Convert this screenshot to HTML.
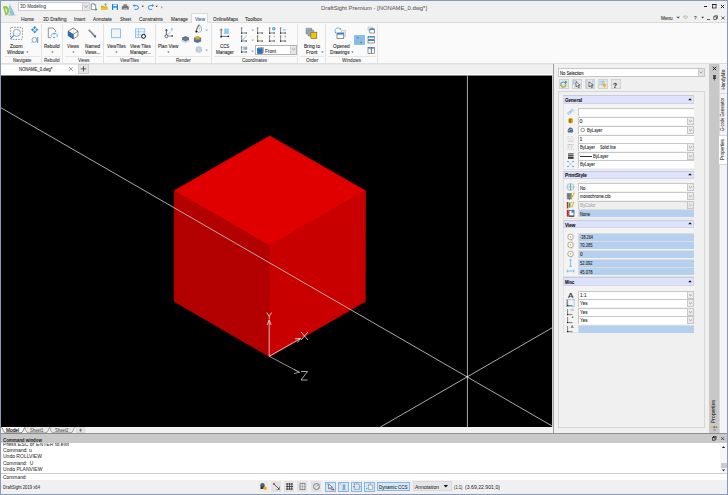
<!DOCTYPE html>
<html><head><meta charset="utf-8"><style>
html,body{margin:0;padding:0;width:728px;height:495px;overflow:hidden;background:#f0f0f0}
body{position:relative;font-family:"Liberation Sans",sans-serif}
div,span,svg{position:absolute}
.t{white-space:nowrap}
</style></head><body>
<div style="left:0px;top:0px;width:728px;height:495px;background:#f0f0f0"></div>
<div style="left:1px;top:22px;width:726px;height:42px;background:#fafafa;border-top:1px solid #dadada;border-bottom:1px solid #dcdcdc;box-sizing:border-box"></div>
<div style="left:3.5px;top:56px;width:36px;height:1px;background:#e6e6e6"></div>
<div style="left:43.5px;top:56px;width:17px;height:1px;background:#e6e6e6"></div>
<div style="left:64.5px;top:56px;width:37px;height:1px;background:#e6e6e6"></div>
<div style="left:105.5px;top:56px;width:48px;height:1px;background:#e6e6e6"></div>
<div style="left:157.5px;top:56px;width:52px;height:1px;background:#e6e6e6"></div>
<div style="left:213.5px;top:56px;width:82px;height:1px;background:#e6e6e6"></div>
<div style="left:299.5px;top:56px;width:24px;height:1px;background:#e6e6e6"></div>
<div style="left:327.5px;top:56px;width:48px;height:1px;background:#e6e6e6"></div>
<div style="left:41px;top:24px;width:1px;height:39px;background:#e2e2e2"></div>
<div style="left:62px;top:24px;width:1px;height:39px;background:#e2e2e2"></div>
<div style="left:103px;top:24px;width:1px;height:39px;background:#e2e2e2"></div>
<div style="left:155px;top:24px;width:1px;height:39px;background:#e2e2e2"></div>
<div style="left:211px;top:24px;width:1px;height:39px;background:#e2e2e2"></div>
<div style="left:297px;top:24px;width:1px;height:39px;background:#e2e2e2"></div>
<div style="left:325px;top:24px;width:1px;height:39px;background:#e2e2e2"></div>
<div style="left:377px;top:24px;width:1px;height:39px;background:#e2e2e2"></div>
<div style="left:1px;top:64px;width:552px;height:11px;background:#f0f0f0"></div>
<div style="left:1px;top:64px;width:77px;height:11px;background:#ffffff"></div>
<div style="left:1px;top:74px;width:552px;height:1px;background:#ffffff"></div>
<div style="left:1px;top:63px;width:552px;height:1px;background:#e0e0e0"></div>
<div style="left:1px;top:64px;width:552px;height:0.6px;background:#e8e8e8"></div>
<div style="left:1px;top:75px;width:551px;height:1px;background:#808080"></div>
<div style="left:1px;top:76px;width:551px;height:351px;background:#000"></div>
<svg style="left:1px;top:75px;" width="551" height="352" viewBox="0 0 551 352">
<rect x="0" y="0" width="551" height="1" fill="#808080"/>
<g stroke-width="0.6" transform="translate(0,0.5)">
<polygon points="268.8,60.4 364.5,115.2 268.6,170.3 173.1,115.2" fill="#e00000" stroke="#e00000"/>
<polygon points="173.1,115.2 268.6,170.3 268.5,281.3 173.1,226" fill="#b30000" stroke="#b30000"/>
<polygon points="268.6,170.3 364.5,115.2 364.3,226.1 268.5,281.3" fill="#c80000" stroke="#c80000"/>
</g>
<g stroke="#bcbcbc" stroke-width="0.9" fill="none">
<line x1="0" y1="32.8" x2="552" y2="351.5"/>
<line x1="466.4" y1="0" x2="466.4" y2="352"/>
<line x1="379.4" y1="352" x2="552" y2="252.3"/>
</g>
<circle cx="466.4" cy="301.8" r="1" fill="#d8d8d8"/>
<g stroke="#e6e6e6" stroke-width="0.8" fill="none">
<line x1="268.2" y1="281.3" x2="268.2" y2="245"/>
<polyline points="266.2,250 268.2,245 270.2,250"/>
<polyline points="265.8,237.5 268.2,241.5 270.6,237.5"/><line x1="268.2" y1="241.5" x2="268.2" y2="244.5"/>
<line x1="268.2" y1="281.3" x2="299.5" y2="263.5"/>
<polyline points="294,263.8 299.5,263.5 296.5,267.5"/>
<line x1="300" y1="257" x2="307" y2="265"/><line x1="307" y1="257" x2="300" y2="265"/>
</g>
<g stroke="#b8b8b8" stroke-width="0.8" fill="none">
<line x1="268.2" y1="281.3" x2="298.5" y2="297.3"/>
<polyline points="293,294.5 298.5,297.3 293,298.5"/>
<polyline points="300,296.5 306.5,296.5 300,305 306.5,305" stroke="#d0d0d0"/>
</g>
</svg>
<div style="left:552px;top:75px;width:1px;height:359px;background:#d0d0d0"></div>
<div style="left:553px;top:64px;width:1px;height:370px;background:#a0a0a0"></div>
<div style="left:709px;top:64px;width:10px;height:368.7px;background:#c8c8c8"></div>
<div style="left:719px;top:64px;width:8px;height:368.7px;background:#f3f3f3;border-left:1px solid #dadada;box-sizing:border-box"></div>
<div style="left:1px;top:427px;width:552px;height:7px;background:#f2f2f2"></div>
<div style="left:1px;top:433px;width:726px;height:1.5px;background:#909090"></div>
<div style="left:1px;top:434px;width:726px;height:9px;background:#c9c9c9"></div>
<div style="left:1px;top:443px;width:726px;height:30px;background:#ffffff"></div>
<div style="left:1px;top:473px;width:726px;height:1px;background:#d0d0d0"></div>
<div style="left:1px;top:474px;width:726px;height:6px;background:#ffffff"></div>
<div style="left:1px;top:480px;width:726px;height:14px;background:#f0f0f0"></div>
<svg style="left:0px;top:0px;" width="20" height="20" viewBox="0 0 20 20">
<polygon points="9.6,3.8 15.2,15.6 8.4,15.6" fill="#93c2ca"/>
<path d="M9.6,9 C10.8,9.2 10.6,11 9.8,11.6 C9,12.2 9.6,13.4 10.8,13.6 L10,14.4 C8.8,14 8.6,12.6 9.4,11.8 Z" fill="#e6f1f3"/>
<path d="M2.8,6.6 C5,5.6 8.6,6 8.9,9.2 C9.2,12.4 7.6,15.4 5.6,15.6 C4.8,12.6 3.8,9.6 2.8,6.6 Z" fill="#8fc845"/>
<path d="M5.2,8.6 C6.2,8.4 7.2,9 7.1,10.6 C7,12 6.6,12.8 6.2,13 C5.9,11.6 5.6,10 5.2,8.6Z" fill="#eef5e6"/>
</svg>
<div style="left:18px;top:2px;width:72px;height:9px;background:#fff;border:1px solid #cdcdcd;box-sizing:border-box"></div>
<div style="left:82px;top:3px;width:7px;height:7px;background:#e6e6e6;border-left:1px solid #c8c8c8;box-sizing:border-box"></div>
<svg style="left:83px;top:4px;" width="6" height="5" viewBox="0 0 6 5"><polyline points="1.2,1.8 3,3.4 4.8,1.8" stroke="#777" stroke-width="0.7" fill="none"/></svg>
<span class="t" style="left:19.5px;top:4.23px;font-size:5.4px;line-height:5.4px;color:#444;transform:scaleX(0.8577);transform-origin:0 0;-webkit-text-stroke:0.05px #444;">3D Modeling</span>
<svg style="left:90px;top:3px;" width="8" height="8" viewBox="0 0 8 8"><path d="M1.3,0.9 H4.3 L5.6,2.2 V6.6 H1.3 Z" fill="#fff" stroke="#555" stroke-width="0.6"/><path d="M4.3,0.9 V2.2 H5.6" fill="none" stroke="#555" stroke-width="0.5"/><path d="M6,5.2 V7.8 M4.7,6.5 H7.3" stroke="#3bb34a" stroke-width="0.8"/></svg>
<svg style="left:100px;top:3px;" width="9" height="8" viewBox="0 0 9 8"><path d="M1,2.8 H3.2 L3.8,3.6 H7.4 V7 H1 Z" fill="#d9a21b"/><path d="M1,4.4 H7.8 L7.2,7 H1Z" fill="#f2c230"/><path d="M5.6,0.6 V3.2 M4.6,1.6 L5.6,0.6 L6.6,1.6" stroke="#3bb34a" stroke-width="0.8" fill="none"/></svg>
<svg style="left:111px;top:3px;" width="8" height="8" viewBox="0 0 8 8"><path d="M1,1 H6.2 L7,1.8 V7 H1 Z" fill="#1a85d6"/><rect x="2.2" y="1.4" width="3.6" height="1.8" fill="#fff"/><rect x="2.2" y="4.6" width="3.6" height="2.4" fill="#e8f3fc"/></svg>
<svg style="left:121px;top:3px;" width="9" height="8" viewBox="0 0 9 8"><rect x="2.4" y="1.2" width="3.8" height="2" fill="#8a8a8a"/><path d="M0.8,4.6 C0.8,3.4 1.6,3 2.4,3 H6.2 C7,3 7.8,3.4 7.8,4.6 V6.4 H0.8Z" fill="#707070"/><rect x="2.4" y="5.2" width="3.8" height="1.8" fill="#b8b8b8"/></svg>
<svg style="left:132px;top:3px;" width="8" height="8" viewBox="0 0 8 8"><path d="M2.4,2.6 H4.6 A1.9,1.9 0 0 1 4.6,6.4 H2.6" stroke="#1a85d6" stroke-width="0.9" fill="none"/><path d="M0.8,2.6 L2.6,1.1 V4.1 Z" fill="#1a85d6"/></svg>
<svg style="left:141px;top:4px;" width="4" height="4" viewBox="0 0 4 4"><path d="M0.4,1.8 H3 L1.7,3.1Z" fill="#222"/></svg>
<svg style="left:147px;top:3px;" width="8" height="8" viewBox="0 0 8 8"><path d="M5.4,2.6 H3.2 A1.9,1.9 0 0 0 3.2,6.4 H5.2" stroke="#1a85d6" stroke-width="0.9" fill="none"/><path d="M7,2.6 L5.2,1.1 V4.1 Z" fill="#1a85d6"/></svg>
<svg style="left:155px;top:4px;" width="4" height="4" viewBox="0 0 4 4"><path d="M0.4,1.8 H3 L1.7,3.1Z" fill="#222"/></svg>
<svg style="left:160px;top:4px;" width="4" height="6" viewBox="0 0 4 6"><rect x="1" y="2.6" width="1.4" height="1.6" fill="#8da0c0"/></svg>
<span class="t" style="left:320.5px;top:4.92px;font-size:6.0px;line-height:6.0px;color:#5a5a5a;transform:scaleX(0.9722);transform-origin:0 0;-webkit-text-stroke:0.05px #5a5a5a;">DraftSight Premium - [NONAME_0.dwg*]</span>
<div style="left:704px;top:5.8px;width:2.6px;height:1px;background:#222"></div>
<svg style="left:711px;top:3px;" width="6" height="6" viewBox="0 0 6 6"><rect x="1.4" y="1.4" width="3.6" height="3.6" fill="none" stroke="#222" stroke-width="0.8"/><rect x="1" y="1" width="4.4" height="1" fill="#222"/></svg>
<svg style="left:720px;top:3.5px;" width="5" height="5" viewBox="0 0 5 5"><path d="M0.9,0.9 L4.1,4.1 M4.1,0.9 L0.9,4.1" stroke="#111" stroke-width="0.9"/></svg>
<div style="left:191px;top:13px;width:17px;height:10px;background:#fafafa;border:1px solid #dadada;border-bottom:none;box-sizing:border-box"></div>
<span class="t" style="left:21px;top:16.66px;font-size:5.6px;line-height:5.6px;color:#333;transform:scaleX(0.8703);transform-origin:0 0;-webkit-text-stroke:0.1px #333;">Home</span>
<span class="t" style="left:42.6px;top:16.66px;font-size:5.6px;line-height:5.6px;color:#333;transform:scaleX(0.8298);transform-origin:0 0;-webkit-text-stroke:0.1px #333;">3D Drafting</span>
<span class="t" style="left:73.9px;top:16.66px;font-size:5.6px;line-height:5.6px;color:#333;transform:scaleX(0.8140);transform-origin:0 0;-webkit-text-stroke:0.1px #333;">Insert</span>
<span class="t" style="left:93.3px;top:16.66px;font-size:5.6px;line-height:5.6px;color:#333;transform:scaleX(0.8431);transform-origin:0 0;-webkit-text-stroke:0.1px #333;">Annotate</span>
<span class="t" style="left:120.1px;top:16.66px;font-size:5.6px;line-height:5.6px;color:#333;transform:scaleX(0.7585);transform-origin:0 0;-webkit-text-stroke:0.1px #333;">Sheet</span>
<span class="t" style="left:139px;top:16.66px;font-size:5.6px;line-height:5.6px;color:#333;transform:scaleX(0.8439);transform-origin:0 0;-webkit-text-stroke:0.1px #333;">Constraints</span>
<span class="t" style="left:170.5px;top:16.66px;font-size:5.6px;line-height:5.6px;color:#333;transform:scaleX(0.8401);transform-origin:0 0;-webkit-text-stroke:0.1px #333;">Manage</span>
<span class="t" style="left:195px;top:16.66px;font-size:5.6px;line-height:5.6px;color:#3b5998;transform:scaleX(0.8308);transform-origin:0 0;-webkit-text-stroke:0.1px #3b5998;">View</span>
<span class="t" style="left:213px;top:16.66px;font-size:5.6px;line-height:5.6px;color:#333;transform:scaleX(0.8367);transform-origin:0 0;-webkit-text-stroke:0.1px #333;">OnlineMaps</span>
<span class="t" style="left:245px;top:16.66px;font-size:5.6px;line-height:5.6px;color:#333;transform:scaleX(0.8808);transform-origin:0 0;-webkit-text-stroke:0.1px #333;">Toolbox</span>
<span class="t" style="left:661.3px;top:16.06px;font-size:5.6px;line-height:5.6px;color:#333;transform:scaleX(0.8353);transform-origin:0 0;-webkit-text-stroke:0.1px #333;">Menu</span>
<svg style="left:676px;top:16px;" width="5" height="3" viewBox="0 0 5 3"><path d="M0.6,0.8 H3.8 L2.2,2.4Z" fill="#333"/></svg>
<svg style="left:683px;top:15px;" width="5" height="5" viewBox="0 0 5 5"><path d="M2.5,4 L0.9,2.2 A0.9,0.9 0 0 1 2.5,1.3 A0.9,0.9 0 0 1 4.1,2.2 Z" stroke="#888" stroke-width="0.55" fill="none"/></svg>
<span class="t" style="left:694.3px;top:15.22px;font-size:6px;line-height:6px;color:#333;transform:scaleX(0.7792);transform-origin:0 0;-webkit-text-stroke:0.1px #333;">?</span>
<svg style="left:701px;top:16px;" width="4" height="3" viewBox="0 0 4 3"><path d="M0.3,0.8 H3 L1.65,2.4Z" fill="#333"/></svg>
<div style="left:707px;top:19px;width:2.5px;height:1px;background:#555"></div>
<svg style="left:713px;top:15px;" width="5" height="5" viewBox="0 0 5 5"><rect x="1.8" y="0.8" width="2.6" height="2.6" fill="none" stroke="#333" stroke-width="0.7"/><rect x="0.8" y="1.8" width="2.6" height="2.6" fill="#f0f0f0" stroke="#333" stroke-width="0.7"/></svg>
<svg style="left:721px;top:15.5px;" width="4" height="4" viewBox="0 0 4 4"><path d="M0.5,0.5 L3.5,3.5 M3.5,0.5 L0.5,3.5" stroke="#444" stroke-width="0.8"/></svg>
<svg style="left:9px;top:26px;" width="15" height="15" viewBox="0 0 15 15">
<rect x="1.6" y="1.4" width="11.8" height="12" rx="1" fill="none" stroke="#5a5a5a" stroke-width="0.7" stroke-dasharray="1.5,1.2"/>
<circle cx="7.7" cy="6.8" r="3.6" fill="#f2f5f7" stroke="#7d98ac" stroke-width="0.8"/>
<line x1="4.8" y1="9.4" x2="2" y2="12.3" stroke="#1a85d6" stroke-width="1.1"/>
</svg>
<svg style="left:30px;top:25px;" width="10" height="10" viewBox="0 0 10 10">
<path d="M4.7,0.9 L6.5,3.1 H2.9 Z M4.7,8.5 L6.5,6.3 H2.9 Z M0.9,4.7 L3.1,2.9 V6.5 Z M8.5,4.7 L6.3,2.9 V6.5 Z" fill="#1f8ae0"/><path d="M4.7,3 V3.9 M4.7,5.5 V6.4 M3,4.7 H3.9 M5.5,4.7 H6.4" stroke="#1f8ae0" stroke-width="1.1"/>
</svg>
<svg style="left:30px;top:36px;" width="10" height="8" viewBox="0 0 10 8">
<circle cx="4.4" cy="3.9" r="2.4" fill="none" stroke="#7890a4" stroke-width="0.8"/>
<path d="M2.4,6 L1.6,6.8" stroke="#2a8de0" stroke-width="0.8"/>
<path d="M7.7,1 V7" stroke="#2a8de0" stroke-width="0.9"/>
</svg>
<span class="t" style="left:10.2px;top:43.86px;font-size:5.6px;line-height:5.6px;color:#2a2a2a;transform:scaleX(0.8733);transform-origin:0 0;-webkit-text-stroke:0.1px #2a2a2a;">Zoom</span>
<span class="t" style="left:7.1px;top:49.56px;font-size:5.6px;line-height:5.6px;color:#2a2a2a;transform:scaleX(0.8485);transform-origin:0 0;-webkit-text-stroke:0.1px #2a2a2a;">Window</span>
<svg style="left:25.5px;top:50.5px;" width="3" height="3" viewBox="0 0 3 3"><path d="M0.2,0.5 H2.6 L1.4,2 Z" fill="#666"/></svg>
<span class="t" style="left:13.2px;top:58.06px;font-size:5.6px;line-height:5.6px;color:#444;transform:scaleX(0.8326);transform-origin:0 0;-webkit-text-stroke:0.1px #444;">Navigate</span>
<svg style="left:47px;top:27px;" width="12" height="12" viewBox="0 0 12 12">
<path d="M4,10.6 H1.3 V1 H6 L8.6,3.6 V5" fill="none" stroke="#707070" stroke-width="0.75"/>
<path d="M4.6,9.6 A3.2,2.2 0 0 1 7.4,6.4" fill="none" stroke="#4aa2ea" stroke-width="0.8"/>
<path d="M8.2,6.4 A3.2,2.2 0 0 1 9.6,10" fill="none" stroke="#4aa2ea" stroke-width="0.8"/>
<path d="M6.8,5.4 L8.6,6.4 L6.8,7.4Z" fill="#2a8de0"/>
<path d="M7.6,9.6 L5.8,10.6 L7.6,11.4Z" fill="#2a8de0"/>
</svg>
<span class="t" style="left:44.4px;top:43.86px;font-size:5.6px;line-height:5.6px;color:#2a2a2a;transform:scaleX(0.8215);transform-origin:0 0;-webkit-text-stroke:0.1px #2a2a2a;">Rebuild</span>
<svg style="left:51px;top:50.5px;" width="3" height="3" viewBox="0 0 3 3"><path d="M0.2,0.5 H2.6 L1.4,2 Z" fill="#666"/></svg>
<span class="t" style="left:44.4px;top:58.06px;font-size:5.6px;line-height:5.6px;color:#444;transform:scaleX(0.8215);transform-origin:0 0;-webkit-text-stroke:0.1px #444;">Rebuild</span>
<svg style="left:67px;top:27px;" width="12" height="13" viewBox="0 0 12 13">
<path d="M6.3,1 L11,4.2 V8.8 L6.3,11.9 L1.2,8.8 V4.2 Z" fill="#fff"/>
<path d="M1.2,4.2 L6.3,7.5 V11.9 L1.2,8.8 Z" fill="#0a7ad4"/>
<path d="M6.3,1.6 V7" stroke="#b4cce0" stroke-width="0.6"/>
<path d="M6.3,1 L11,4.2 V8.8 L6.3,11.9 L1.2,8.8 V4.2 Z M1.2,4.2 L6.3,7.5 L11,4.2 M6.3,7.5 V11.9" fill="none" stroke="#383838" stroke-width="0.6"/>
</svg>
<svg style="left:87px;top:28px;" width="10" height="11" viewBox="0 0 10 11">
<path d="M1.2,2.2 L2.2,1.2 L8.9,7.9 L7.9,9.4 Z" fill="#6f8797"/>
<path d="M1.6,2.4 L2.4,1.6 L7,6.2" stroke="#9fb4c2" stroke-width="0.4" fill="none"/>
<circle cx="8.2" cy="8.6" r="1" fill="#4a5560"/>
</svg>
<span class="t" style="left:67.1px;top:43.86px;font-size:5.6px;line-height:5.6px;color:#2a2a2a;transform:scaleX(0.8021);transform-origin:0 0;-webkit-text-stroke:0.1px #2a2a2a;">Views</span>
<svg style="left:72px;top:50.5px;" width="3" height="3" viewBox="0 0 3 3"><path d="M0.2,0.5 H2.6 L1.4,2 Z" fill="#666"/></svg>
<span class="t" style="left:84.9px;top:43.86px;font-size:5.6px;line-height:5.6px;color:#2a2a2a;transform:scaleX(0.8365);transform-origin:0 0;-webkit-text-stroke:0.1px #2a2a2a;">Named</span>
<span class="t" style="left:84.9px;top:49.56px;font-size:5.6px;line-height:5.6px;color:#2a2a2a;transform:scaleX(0.7742);transform-origin:0 0;-webkit-text-stroke:0.1px #2a2a2a;">Views...</span>
<span class="t" style="left:77.8px;top:58.06px;font-size:5.6px;line-height:5.6px;color:#444;transform:scaleX(0.7751);transform-origin:0 0;-webkit-text-stroke:0.1px #444;">Views</span>
<svg style="left:110px;top:27px;" width="12" height="12" viewBox="0 0 12 12"><rect x="1.6" y="1.9" width="8.8" height="8.8" fill="#f4f4f4" stroke="#6ab4f0" stroke-width="0.8"/></svg>
<svg style="left:134px;top:27px;" width="14" height="13" viewBox="0 0 14 13">
<rect x="1.6" y="1.9" width="9.2" height="8.8" fill="#f6f6f6" stroke="#6ab4f0" stroke-width="0.7"/>
<path d="M1.6,4.8 H10.8 M1.6,7.8 H10.8 M4.6,1.9 V10.7" stroke="#6ab4f0" stroke-width="0.6"/>
<circle cx="9.6" cy="9.3" r="1.9" fill="#fff" stroke="#111" stroke-width="1"/>
<path d="M9.6,6.8 V7.4 M9.6,11.2 V11.8 M7.1,9.3 H7.7 M11.5,9.3 H12.1" stroke="#111" stroke-width="0.7"/>
</svg>
<span class="t" style="left:106.7px;top:43.86px;font-size:5.6px;line-height:5.6px;color:#2a2a2a;transform:scaleX(0.7864);transform-origin:0 0;-webkit-text-stroke:0.1px #2a2a2a;">ViewTiles</span>
<svg style="left:115px;top:50.5px;" width="3" height="3" viewBox="0 0 3 3"><path d="M0.2,0.5 H2.6 L1.4,2 Z" fill="#666"/></svg>
<span class="t" style="left:129.8px;top:43.86px;font-size:5.6px;line-height:5.6px;color:#2a2a2a;transform:scaleX(0.8325);transform-origin:0 0;-webkit-text-stroke:0.1px #2a2a2a;">View Tiles</span>
<span class="t" style="left:129.8px;top:49.56px;font-size:5.6px;line-height:5.6px;color:#2a2a2a;transform:scaleX(0.7899);transform-origin:0 0;-webkit-text-stroke:0.1px #2a2a2a;">Manager...</span>
<span class="t" style="left:120px;top:58.06px;font-size:5.6px;line-height:5.6px;color:#444;transform:scaleX(0.8075);transform-origin:0 0;-webkit-text-stroke:0.1px #444;">ViewTiles</span>
<svg style="left:163px;top:27px;" width="12" height="12" viewBox="0 0 12 12">
<path d="M3.4,9 V3.2" stroke="#333" stroke-width="0.8"/>
<path d="M1.8,3.6 L3.4,2 L5,3.6 Z" fill="#222"/>
<path d="M3.6,9 H9.6" stroke="#666" stroke-width="0.7"/>
<rect x="8.6" y="8.4" width="1.4" height="1.2" fill="#333"/>
<path d="M3.8,8.6 L7.8,4.6" stroke="#6ab4f0" stroke-width="0.7"/>
<path d="M8,1.6 H9.6 L8,3.2 H9.8" stroke="#5aa8ea" stroke-width="0.55" fill="none"/>
<circle cx="3.4" cy="9.2" r="1.5" fill="#fff" stroke="#333" stroke-width="0.7"/>
</svg>
<span class="t" style="left:158px;top:43.86px;font-size:5.6px;line-height:5.6px;color:#2a2a2a;transform:scaleX(0.8226);transform-origin:0 0;-webkit-text-stroke:0.1px #2a2a2a;">Plan View</span>
<svg style="left:167px;top:50.5px;" width="3" height="3" viewBox="0 0 3 3"><path d="M0.2,0.5 H2.6 L1.4,2 Z" fill="#666"/></svg>
<svg style="left:181px;top:35px;" width="9" height="9" viewBox="0 0 9 9">
<path d="M1,2.6 L4.5,1 L8,2.6 V5 L4.5,6.6 L1,5 Z" fill="#5f7283"/>
<path d="M1,5 L4.5,6.6 L8,5 V6.2 L4.5,7.8 L1,6.2Z" fill="#e8eef3" stroke="#9fb0c0" stroke-width="0.45"/>
<path d="M1,2.6 L4.5,4.2 L8,2.6" fill="none" stroke="#8ea2b4" stroke-width="0.45"/>
</svg>
<svg style="left:194px;top:24px;" width="9" height="10" viewBox="0 0 9 10">
<path d="M5,0.8 C6.2,1.2 7.6,3.6 7.6,6.2 C7.6,7.6 6,8.2 4.4,8.2 L2.2,6.6 C2.6,4.2 3.6,1.4 5,0.8Z" fill="#f6f8fa" stroke="#666" stroke-width="0.5"/>
<path d="M5,0.8 C4.2,2.4 3.2,4.6 2.2,6.6" fill="none" stroke="#333" stroke-width="0.7"/>
<path d="M5.4,2.2 V6" stroke="#8fb6d8" stroke-width="0.6"/>
<circle cx="2.4" cy="7.6" r="1.1" fill="#222"/>
</svg>
<svg style="left:193px;top:35px;" width="9" height="9" viewBox="0 0 9 9">
<path d="M0.9,2.8 L4.5,1.3 L8.1,2.8 V6.6 L4.5,8.1 L0.9,6.6 Z" fill="#56718a"/>
<ellipse cx="4.5" cy="2.7" rx="2.6" ry="1.4" fill="#e8b000"/>
<path d="M1.6,4.6 H7.4" stroke="#9fb6ca" stroke-width="0.5"/>
</svg>
<svg style="left:195px;top:46px;" width="8" height="8" viewBox="0 0 8 8"><circle cx="3.8" cy="3.6" r="3.3" fill="#b9c7d6"/><path d="M1,3.6 H6.6 M3.8,0.5 V6.8 M1.7,1.6 C3,2.6 4.6,2.6 6,1.6 M1.7,5.6 C3,4.6 4.6,4.6 6,5.6" stroke="#dde5ec" stroke-width="0.4" fill="none"/></svg>
<svg style="left:205px;top:28.5px;" width="4" height="3" viewBox="0 0 4 3"><path d="M0.4,0.8 H3 L1.7,1.8 Z" fill="#4a6a9a"/></svg>
<svg style="left:205px;top:49px;" width="4" height="3" viewBox="0 0 4 3"><path d="M0.4,0.8 H3 L1.7,1.8 Z" fill="#4a6a9a"/></svg>
<span class="t" style="left:176.2px;top:58.06px;font-size:5.6px;line-height:5.6px;color:#444;transform:scaleX(0.8004);transform-origin:0 0;-webkit-text-stroke:0.1px #444;">Render</span>
<svg style="left:218px;top:27px;" width="13" height="12" viewBox="0 0 13 12">
<path d="M3.2,10 V2.4 M3.2,9.4 H10.2" stroke="#333" stroke-width="0.7"/>
<path d="M2.2,3.4 L3.2,1.8 L4.2,3.4" fill="none" stroke="#333" stroke-width="0.6"/>
<rect x="2.4" y="9" width="1.5" height="1.5" fill="#222"/><rect x="9.6" y="8.7" width="1.4" height="1.4" fill="#222"/>
<rect x="6" y="1.6" width="5" height="5.4" fill="#a8d6f8"/>
<path d="M7.6,1.6 V7 M9.4,1.6 V7" stroke="#60b4f0" stroke-width="0.5"/>
</svg>
<span class="t" style="left:219.9px;top:44.06px;font-size:5.6px;line-height:5.6px;color:#2a2a2a;transform:scaleX(0.7865);transform-origin:0 0;-webkit-text-stroke:0.1px #2a2a2a;">CCS</span>
<span class="t" style="left:215.6px;top:49.76px;font-size:5.6px;line-height:5.6px;color:#2a2a2a;transform:scaleX(0.8100);transform-origin:0 0;-webkit-text-stroke:0.1px #2a2a2a;">Manager</span>
<svg style="left:239.5px;top:26.5px;" width="9" height="8" viewBox="0 0 9 8"><path d="M1.6,0.6 V6.4 M1.6,6 H6.6" fill="none" stroke="#3a3a3a" stroke-width="0.6"/><path d="M0.8,1 H2.4" stroke="#3a3a3a" stroke-width="0.5"/><rect x="1" y="5.6" width="1.2" height="1.2" fill="#222"/><rect x="5.6" y="5.4" width="1.2" height="1.2" fill="#444"/></svg>
<svg style="left:256px;top:26.5px;" width="9" height="8" viewBox="0 0 9 8"><path d="M1.6,0.6 V6.4 M1.6,6 H6.6" fill="none" stroke="#3a3a3a" stroke-width="0.6"/><path d="M0.8,1 H2.4" stroke="#3a3a3a" stroke-width="0.5"/><rect x="1" y="5.6" width="1.2" height="1.2" fill="#222"/><rect x="5.6" y="5.4" width="1.2" height="1.2" fill="#444"/></svg>
<svg style="left:267.5px;top:26.5px;" width="9" height="8" viewBox="0 0 9 8"><path d="M1.6,0.6 V6.4 M1.6,6 H6.6" fill="none" stroke="#3a3a3a" stroke-width="0.6"/><path d="M0.8,1 H2.4" stroke="#3a3a3a" stroke-width="0.5"/><rect x="1" y="5.6" width="1.2" height="1.2" fill="#222"/><rect x="5.6" y="5.4" width="1.2" height="1.2" fill="#444"/><circle cx="5.8" cy="1.8" r="1.7" fill="#3a9de8"/><circle cx="5.8" cy="1.8" r="0.6" fill="#fff"/></svg>
<svg style="left:278.5px;top:26.5px;" width="9" height="8" viewBox="0 0 9 8"><path d="M1.6,0.6 V6.4 M1.6,6 H6.6" fill="none" stroke="#3a3a3a" stroke-width="0.6"/><path d="M0.8,1 H2.4" stroke="#3a3a3a" stroke-width="0.5"/><rect x="1" y="5.6" width="1.2" height="1.2" fill="#222"/><rect x="5.6" y="5.4" width="1.2" height="1.2" fill="#444"/><path d="M4,2.8 H7.4" stroke="#3a9de8" stroke-width="0.6"/><path d="M4.6,2.2 L4,2.8 L4.6,3.4" stroke="#3a9de8" stroke-width="0.5" fill="none"/></svg>
<svg style="left:239.5px;top:35px;" width="9" height="8" viewBox="0 0 9 8"><path d="M1.6,0.6 V6.4 M1.6,6 H6.6" fill="none" stroke="#3a3a3a" stroke-width="0.6"/><path d="M0.8,1 H2.4" stroke="#3a3a3a" stroke-width="0.5"/><rect x="1" y="5.6" width="1.2" height="1.2" fill="#222"/><rect x="5.6" y="5.4" width="1.2" height="1.2" fill="#444"/><path d="M2.2,5.2 L5.6,2.2" stroke="#3a9de8" stroke-width="0.6"/><path d="M2.6,3 L4.4,4.6 L2.6,5.2Z" fill="#a8d4f4"/><path d="M6,0.6 V1.8" stroke="#666" stroke-width="0.5"/></svg>
<svg style="left:256px;top:35px;" width="9" height="8" viewBox="0 0 9 8"><path d="M1.6,0.6 V6.4 M1.6,6 H6.6" fill="none" stroke="#3a3a3a" stroke-width="0.6"/><path d="M0.8,1 H2.4" stroke="#3a3a3a" stroke-width="0.5"/><rect x="1" y="5.6" width="1.2" height="1.2" fill="#222"/><rect x="5.6" y="5.4" width="1.2" height="1.2" fill="#444"/><path d="M1.8,4.6 L4.2,5.8 L1.8,6.2Z" fill="#d8a000"/></svg>
<svg style="left:267.5px;top:35px;" width="9" height="8" viewBox="0 0 9 8"><path d="M1.6,0.6 V6.4 M1.6,6 H6.6" fill="none" stroke="#3a3a3a" stroke-width="0.6"/><path d="M0.8,1 H2.4" stroke="#3a3a3a" stroke-width="0.5"/><rect x="1" y="5.6" width="1.2" height="1.2" fill="#222"/><rect x="5.6" y="5.4" width="1.2" height="1.2" fill="#444"/><path d="M6.2,0.6 V2.4" stroke="#555" stroke-width="0.5"/></svg>
<svg style="left:278.5px;top:35px;" width="9" height="8" viewBox="0 0 9 8"><path d="M1.6,0.6 V6.4 M1.6,6 H6.6" fill="none" stroke="#3a3a3a" stroke-width="0.6"/><path d="M0.8,1 H2.4" stroke="#3a3a3a" stroke-width="0.5"/><rect x="1" y="5.6" width="1.2" height="1.2" fill="#222"/><rect x="5.6" y="5.4" width="1.2" height="1.2" fill="#444"/><path d="M6.2,0.6 V2.4" stroke="#333" stroke-width="0.6"/></svg>
<svg style="left:239.5px;top:45.5px;" width="9" height="8" viewBox="0 0 9 8"><path d="M1.6,0.6 V6.4 M1.6,6 H6.6" fill="none" stroke="#3a3a3a" stroke-width="0.6"/><path d="M0.8,1 H2.4" stroke="#3a3a3a" stroke-width="0.5"/><rect x="1" y="5.6" width="1.2" height="1.2" fill="#222"/><rect x="5.6" y="5.4" width="1.2" height="1.2" fill="#444"/><rect x="3.4" y="0.6" width="3.8" height="3.2" fill="#90acd4"/></svg>
<svg style="left:251px;top:28.5px;" width="4" height="3" viewBox="0 0 4 3"><path d="M0.4,0.8 H3 L1.7,1.8 Z" fill="#4a6a9a"/></svg>
<svg style="left:251px;top:39px;" width="4" height="3" viewBox="0 0 4 3"><path d="M0.4,0.8 H3 L1.7,1.8 Z" fill="#4a6a9a"/></svg>
<svg style="left:251px;top:49.5px;" width="4" height="3" viewBox="0 0 4 3"><path d="M0.4,0.8 H3 L1.7,1.8 Z" fill="#4a6a9a"/></svg>
<div style="left:255px;top:45px;width:42px;height:10px;background:#fff;border:1px solid #b4b4b4;box-sizing:border-box"></div>
<div style="left:290px;top:46px;width:6px;height:8px;background:#e6e6e6;border-left:1px solid #cfcfcf;box-sizing:border-box"></div>
<svg style="left:290.5px;top:47px;" width="5" height="5" viewBox="0 0 5 5"><polyline points="1,1.5 2.6,3 4.2,1.5" stroke="#777" stroke-width="0.6" fill="none"/></svg>
<svg style="left:257px;top:46.5px;" width="7" height="7" viewBox="0 0 7 7"><rect x="0.5" y="1.6" width="5" height="4.8" fill="#0a6fc2"/><path d="M0.5,1.6 L1.6,0.5 H6.5 V5.3 L5.5,6.4" fill="#dde" stroke="#555" stroke-width="0.4"/><rect x="0.5" y="1.6" width="5" height="4.8" fill="#1078d0" stroke="#345" stroke-width="0.4"/></svg>
<span class="t" style="left:265px;top:49.10px;font-size:5.2px;line-height:5.2px;color:#333;transform:scaleX(0.9064);transform-origin:0 0;-webkit-text-stroke:0.1px #333;">Front</span>
<span class="t" style="left:242.4px;top:58.06px;font-size:5.6px;line-height:5.6px;color:#444;transform:scaleX(0.8313);transform-origin:0 0;-webkit-text-stroke:0.1px #444;">Coordinates</span>
<svg style="left:305px;top:27px;" width="13" height="13" viewBox="0 0 13 13">
<rect x="1" y="1.2" width="5.8" height="5.8" rx="0.6" fill="#a3aeb8" stroke="#66717a" stroke-width="0.5"/>
<rect x="3" y="3.2" width="5.8" height="5.8" rx="0.6" fill="#a3aeb8" stroke="#66717a" stroke-width="0.5"/>
<rect x="5.8" y="5.2" width="6" height="6.2" fill="#f5c400" stroke="#5a5540" stroke-width="0.55"/>
</svg>
<span class="t" style="left:303.7px;top:44.06px;font-size:5.6px;line-height:5.6px;color:#2a2a2a;transform:scaleX(0.8291);transform-origin:0 0;-webkit-text-stroke:0.1px #2a2a2a;">Bring to</span>
<span class="t" style="left:305.9px;top:49.76px;font-size:5.6px;line-height:5.6px;color:#2a2a2a;transform:scaleX(0.8799);transform-origin:0 0;-webkit-text-stroke:0.1px #2a2a2a;">Front</span>
<svg style="left:320.5px;top:50.5px;" width="3" height="3" viewBox="0 0 3 3"><path d="M0.2,0.5 H2.6 L1.4,2 Z" fill="#4a6a9a"/></svg>
<span class="t" style="left:305.9px;top:58.06px;font-size:5.6px;line-height:5.6px;color:#444;transform:scaleX(0.8593);transform-origin:0 0;-webkit-text-stroke:0.1px #444;">Order</span>
<svg style="left:334px;top:27px;" width="13" height="13" viewBox="0 0 13 13">
<rect x="7.4" y="3.2" width="4.4" height="6.2" fill="#e4e8ec" stroke="#b8c0c8" stroke-width="0.5"/>
<rect x="3" y="6" width="6.8" height="5.6" fill="#fff" stroke="#444" stroke-width="0.6"/>
<rect x="3" y="6" width="6.8" height="1.6" fill="#1f86db"/>
<path d="M1.6,5.4 A3,2.6 0 0 1 6.6,2" fill="none" stroke="#3a9de8" stroke-width="0.7"/>
<path d="M5.8,0.8 L7.4,2 L5.8,3Z" fill="#3a9de8"/><path d="M0.9,4.4 L2.4,5.8 L1,6.4Z" fill="#3a9de8"/>
</svg>
<span class="t" style="left:332.5px;top:44.06px;font-size:5.6px;line-height:5.6px;color:#2a2a2a;transform:scaleX(0.8381);transform-origin:0 0;-webkit-text-stroke:0.1px #2a2a2a;">Opened</span>
<span class="t" style="left:330px;top:49.76px;font-size:5.6px;line-height:5.6px;color:#2a2a2a;transform:scaleX(0.8355);transform-origin:0 0;-webkit-text-stroke:0.1px #2a2a2a;">Drawings</span>
<svg style="left:351px;top:50.5px;" width="3" height="3" viewBox="0 0 3 3"><path d="M0.2,0.5 H2.6 L1.4,2 Z" fill="#4a6a9a"/></svg>
<div style="left:354px;top:34.5px;width:11px;height:10px;background:#8fbdf0"></div>
<svg style="left:354px;top:34.5px;" width="11" height="10" viewBox="0 0 11 10"><path d="M2.4,2.8 H5" stroke="#2a78c8" stroke-width="0.8"/><path d="M2.4,3.6 V7.4 H7.4 M5.6,3 H7.6 V6" stroke="#7f9cc0" stroke-width="0.5" stroke-dasharray="0.8,0.6" fill="none"/><circle cx="7.2" cy="7.6" r="1" fill="#3cb043"/></svg>
<svg style="left:367px;top:25.5px;" width="9" height="8" viewBox="0 0 9 8"><rect x="1" y="1" width="4.6" height="3.6" fill="#eef2f6" stroke="#9aa6b2" stroke-width="0.5"/><rect x="2.8" y="2.8" width="4.6" height="4.2" fill="#fff" stroke="#444" stroke-width="0.55"/><rect x="2.8" y="2.8" width="4.6" height="1.2" fill="#2a8de0"/></svg>
<svg style="left:367px;top:35.5px;" width="9" height="8" viewBox="0 0 9 8"><rect x="1" y="0.6" width="6.6" height="3" fill="#fff" stroke="#444" stroke-width="0.55"/><rect x="1" y="0.6" width="6.6" height="1" fill="#2a8de0"/><rect x="1" y="4" width="6.6" height="3" fill="#fff" stroke="#444" stroke-width="0.55"/><rect x="1" y="4" width="6.6" height="1" fill="#2a8de0"/></svg>
<svg style="left:367px;top:46.5px;" width="9" height="8" viewBox="0 0 9 8"><rect x="1" y="0.6" width="3.1" height="6" fill="#fff" stroke="#444" stroke-width="0.55"/><rect x="4.5" y="0.6" width="3.1" height="6" fill="#fff" stroke="#444" stroke-width="0.55"/><rect x="1" y="0.6" width="6.6" height="1" fill="#2a8de0"/></svg>
<span class="t" style="left:342.4px;top:58.06px;font-size:5.6px;line-height:5.6px;color:#444;transform:scaleX(0.8408);transform-origin:0 0;-webkit-text-stroke:0.1px #444;">Windows</span>
<span class="t" style="left:18.5px;top:67.94px;font-size:4.8px;line-height:4.8px;color:#333;transform:scaleX(0.8721);transform-origin:0 0;-webkit-text-stroke:0.1px #333;">NONAME_0.dwg*</span>
<svg style="left:68px;top:66px;" width="6" height="6" viewBox="0 0 6 6"><path d="M1,1 L4.8,4.8 M4.8,1 L1,4.8" stroke="#555" stroke-width="0.6"/></svg>
<div style="left:78px;top:64px;width:11px;height:10px;background:#e4e4e4;border:1px solid #cdcdcd;box-sizing:border-box"></div>
<svg style="left:78px;top:64px;" width="11" height="10" viewBox="0 0 11 10"><path d="M5.5,2.2 V7.4 M2.8,4.8 H8.2" stroke="#3a3a3a" stroke-width="0.8"/></svg>
<div style="left:558px;top:68px;width:147px;height:9px;background:#fff;border:1px solid #c6c6c6;box-sizing:border-box"></div>
<div style="left:698px;top:69px;width:6px;height:7px;background:#e2e2e2;border-left:1px solid #cfcfcf;box-sizing:border-box"></div>
<svg style="left:698px;top:69px;" width="6" height="7" viewBox="0 0 6 7"><polyline points="1.6,2.6 3,4 4.4,2.6" stroke="#777" stroke-width="0.6" fill="none"/></svg>
<span class="t" style="left:559.5px;top:71.43px;font-size:5.4px;line-height:5.4px;color:#222;transform:scaleX(0.7676);transform-origin:0 0;-webkit-text-stroke:0.1px #222;">No Selection</span>
<div style="left:559px;top:79px;width:10px;height:10px;background:#e6e6e6;border:1px solid #d2d2d2;box-sizing:border-box"></div>
<div style="left:572px;top:79px;width:10px;height:10px;background:#e6e6e6;border:1px solid #d2d2d2;box-sizing:border-box"></div>
<div style="left:585px;top:79px;width:10px;height:10px;background:#e6e6e6;border:1px solid #d2d2d2;box-sizing:border-box"></div>
<div style="left:598px;top:79px;width:10px;height:10px;background:#e6e6e6;border:1px solid #d2d2d2;box-sizing:border-box"></div>
<div style="left:610.5px;top:79px;width:10px;height:10px;background:#e6e6e6;border:1px solid #d2d2d2;box-sizing:border-box"></div>
<svg style="left:559px;top:79px;" width="10" height="10" viewBox="0 0 10 10"><circle cx="4.3" cy="5.6" r="2.6" fill="none" stroke="#2a8de0" stroke-width="1"/><path d="M2.2,5.6 A2.2,2.2 0 0 0 6.5,6" stroke="#f0b400" stroke-width="1.2" fill="none"/><path d="M6,1.5 L8.6,3 L6,4.5Z" fill="#3cb043"/></svg>
<svg style="left:572px;top:79px;" width="10" height="10" viewBox="0 0 10 10"><rect x="1.5" y="1.8" width="3" height="3" fill="none" stroke="#7aaee0" stroke-width="0.6"/><path d="M4,2.8 L4,8 L5.3,6.6 L6.6,8.8 L7.4,8.4 L6.3,6.2 L8.2,6.2Z" fill="#fff" stroke="#222" stroke-width="0.6"/></svg>
<svg style="left:585px;top:79px;" width="10" height="10" viewBox="0 0 10 10"><path d="M1.8,1.5 V8.5 M7.8,1.5 V8.5" stroke="#2a8de0" stroke-width="0.6" stroke-dasharray="1,1"/><path d="M4,2.8 L4,8 L5.3,6.6 L6.6,8.8 L7.4,8.4 L6.3,6.2 L8.2,6.2Z" fill="#fff" stroke="#222" stroke-width="0.6"/></svg>
<svg style="left:598px;top:79px;" width="10" height="10" viewBox="0 0 10 10"><g fill="#5aa8ea"><rect x="1.6" y="1.8" width="0.8" height="0.8"/><rect x="3.2" y="1.8" width="3.6" height="0.7"/><rect x="1.6" y="3.6" width="0.8" height="0.8"/><rect x="3.2" y="3.6" width="3.6" height="0.7"/><rect x="1.6" y="5.4" width="0.8" height="0.8"/><rect x="3.2" y="5.4" width="2" height="0.7"/></g><path d="M6.6,4.4 C8.4,4.4 8.6,6.8 7.4,7.4 L7,8.6 H6.2 L5.8,7.4 C4.6,6.8 4.8,4.4 6.6,4.4Z" fill="#f0b400"/></svg>
<span class="t" style="left:613px;top:82.11px;font-size:7.2px;line-height:7.2px;color:#111;font-weight:bold;transform:scaleX(0.9096);transform-origin:0 0;-webkit-text-stroke:0.05px #111;">?</span>
<div style="left:558px;top:91px;width:147px;height:337px;border:1px solid #d6d6d6;box-sizing:border-box"></div>
<div style="left:563px;top:95px;width:131px;height:8.5px;background:#dfe2fb;border:1px solid #d2d5ea;border-top-color:#c6c9e0;box-sizing:border-box"></div>
<span class="t" style="left:565px;top:97.90px;font-size:5.2px;line-height:5.2px;color:#111;font-weight:bold;transform:scaleX(0.8779);transform-origin:0 0;-webkit-text-stroke:0.1px #111;">General</span>
<svg style="left:688px;top:97.5px;" width="4" height="3" viewBox="0 0 4 3"><path d="M0.2,2.2 L2,0.3 L3.8,2.2Z" fill="#111"/></svg>
<div style="left:563px;top:103.5px;width:131px;height:66.0px;border-left:1px solid #e2e2e2;border-bottom:1px solid #e2e2e2;box-sizing:border-box;background:#f3f3f3"></div>
<div style="left:578px;top:108.2px;width:116px;height:8px;background:#fff;border-top:1px solid #c8c8c8;border-left:1px solid #c8c8c8;box-sizing:border-box"></div>
<div style="left:578px;top:117px;width:116px;height:8px;background:#fff;border-top:1px solid #c8c8c8;border-left:1px solid #c8c8c8;box-sizing:border-box"></div>
<div style="left:687px;top:117px;width:7px;height:8px;background:#ececec;border:1px solid #c6c6c6;box-sizing:border-box"></div>
<svg style="left:687px;top:117px;" width="7" height="8" viewBox="0 0 7 8"><polyline points="2,3.4 3.5,4.8 5,3.4" stroke="#666" stroke-width="0.6" fill="none"/></svg>
<span class="t" style="left:579.5px;top:119.20px;font-size:5.2px;line-height:5.2px;color:#222;-webkit-text-stroke:0.08px #222;">0</span>
<div style="left:578px;top:125.75px;width:116px;height:8px;background:#fff;border-top:1px solid #c8c8c8;border-left:1px solid #c8c8c8;box-sizing:border-box"></div>
<div style="left:687px;top:125.75px;width:7px;height:8px;background:#ececec;border:1px solid #c6c6c6;box-sizing:border-box"></div>
<svg style="left:687px;top:125.75px;" width="7" height="8" viewBox="0 0 7 8"><polyline points="2,3.4 3.5,4.8 5,3.4" stroke="#666" stroke-width="0.6" fill="none"/></svg>
<span class="t" style="left:586.7px;top:127.95px;font-size:5.2px;line-height:5.2px;color:#222;transform:scaleX(0.8021);transform-origin:0 0;-webkit-text-stroke:0.08px #222;">ByLayer</span>
<svg style="left:580px;top:127.25px;" width="6" height="6" viewBox="0 0 6 6"><circle cx="2.7" cy="3" r="1.8" fill="#fff" stroke="#555" stroke-width="0.6"/></svg>
<div style="left:578px;top:134.5px;width:116px;height:8px;background:#fff;border-top:1px solid #c8c8c8;border-left:1px solid #c8c8c8;box-sizing:border-box"></div>
<span class="t" style="left:579.5px;top:136.70px;font-size:5.2px;line-height:5.2px;color:#222;-webkit-text-stroke:0.08px #222;">1</span>
<div style="left:578px;top:143.25px;width:116px;height:8px;background:#fff;border-top:1px solid #c8c8c8;border-left:1px solid #c8c8c8;box-sizing:border-box"></div>
<div style="left:687px;top:143.25px;width:7px;height:8px;background:#ececec;border:1px solid #c6c6c6;box-sizing:border-box"></div>
<svg style="left:687px;top:143.25px;" width="7" height="8" viewBox="0 0 7 8"><polyline points="2,3.4 3.5,4.8 5,3.4" stroke="#666" stroke-width="0.6" fill="none"/></svg>
<span class="t" style="left:579.5px;top:145.45px;font-size:5.2px;line-height:5.2px;color:#222;transform:scaleX(0.7864);transform-origin:0 0;-webkit-text-stroke:0.08px #222;">ByLayer</span>
<span class="t" style="left:600px;top:145.45px;font-size:5.2px;line-height:5.2px;color:#222;transform:scaleX(0.7582);transform-origin:0 0;-webkit-text-stroke:0.08px #222;">Solid line</span>
<div style="left:578px;top:151.75px;width:116px;height:8px;background:#fff;border-top:1px solid #c8c8c8;border-left:1px solid #c8c8c8;box-sizing:border-box"></div>
<div style="left:687px;top:151.75px;width:7px;height:8px;background:#ececec;border:1px solid #c6c6c6;box-sizing:border-box"></div>
<svg style="left:687px;top:151.75px;" width="7" height="8" viewBox="0 0 7 8"><polyline points="2,3.4 3.5,4.8 5,3.4" stroke="#666" stroke-width="0.6" fill="none"/></svg>
<span class="t" style="left:592.7px;top:153.95px;font-size:5.2px;line-height:5.2px;color:#222;transform:scaleX(0.8021);transform-origin:0 0;-webkit-text-stroke:0.08px #222;">ByLayer</span>
<div style="left:579.5px;top:155.75px;width:12.5px;height:0.8px;background:#333"></div>
<div style="left:578px;top:160px;width:116px;height:8px;background:#fff;border-top:1px solid #c8c8c8;border-left:1px solid #c8c8c8;box-sizing:border-box"></div>
<span class="t" style="left:579.5px;top:162.20px;font-size:5.2px;line-height:5.2px;color:#222;transform:scaleX(0.7864);transform-origin:0 0;-webkit-text-stroke:0.08px #222;">ByLayer</span>
<svg style="left:566px;top:108.2px;" width="9" height="8" viewBox="0 0 9 8"><path d="M3.5,4.6 L5.6,2.6" stroke="#6ab0ec" stroke-width="0.7"/><rect x="1.6" y="4" width="3" height="2" rx="1" transform="rotate(-45 3.1 5)" fill="none" stroke="#6ab0ec" stroke-width="0.7"/><rect x="4.4" y="1.6" width="3" height="2" rx="1" transform="rotate(-45 5.9 2.6)" fill="none" stroke="#6ab0ec" stroke-width="0.7"/></svg>
<svg style="left:566px;top:117px;" width="9" height="8" viewBox="0 0 9 8"><path d="M2.4,1.8 L4.6,1 L6.8,1.8 V5.6 L4.6,6.6 L2.4,5.6Z" fill="#c9a000"/><path d="M3.4,2.2 L4.6,1.8 V5.8 L3.4,5.2Z" fill="#806600"/></svg>
<svg style="left:566px;top:125.75px;" width="9" height="8" viewBox="0 0 9 8"><path d="M1.6,5.8 C1.6,3.2 3,1.6 4.4,1.6 C5.8,1.6 7.2,3.2 7.2,5 L6.4,6.6 H2.4Z" fill="#4c6680"/><circle cx="3.3" cy="4.2" r="0.7" fill="#a8cbe8"/><circle cx="5.1" cy="3.4" r="0.7" fill="#a8cbe8"/><circle cx="6" cy="5.5" r="0.9" fill="#2a8de0"/></svg>
<svg style="left:566px;top:134.5px;" width="9" height="8" viewBox="0 0 9 8"><path d="M1.5,1.8 H3.2 M4.6,1.8 H6.6 M1.5,4 H2.4 M3.4,4 H4.2 M5.2,4 H6 M7,4 H7.6 M1.5,6.2 H7.6" stroke="#b0b0b0" stroke-width="0.6"/></svg>
<svg style="left:566px;top:143.25px;" width="9" height="8" viewBox="0 0 9 8"><path d="M1.5,1.8 H7.6 M1.5,4 H3.2 M4.6,4 H6.6 M1.5,6.2 H2.4 M3.4,6.2 H4.2 M5.2,6.2 H6 M7,6.2 H7.6" stroke="#9a9a9a" stroke-width="0.6"/></svg>
<svg style="left:566px;top:151.75px;" width="9" height="8" viewBox="0 0 9 8"><rect x="2" y="1" width="5.6" height="0.8" fill="#666"/><rect x="2" y="2.5" width="5.6" height="1.4" fill="#444"/><rect x="2" y="4.6" width="5.6" height="2.2" fill="#333"/></svg>
<svg style="left:566px;top:160px;" width="9" height="8" viewBox="0 0 9 8"><path d="M2.2,1.6 L6.8,6.4 M6.8,1.6 L2.2,6.4" stroke="#7ab6ea" stroke-width="0.6" stroke-dasharray="1,0.8"/><circle cx="2" cy="1.5" r="0.7" fill="#2a8de0"/><circle cx="7" cy="1.5" r="0.7" fill="#2a8de0"/><circle cx="2" cy="6.5" r="0.7" fill="#2a8de0"/><circle cx="7" cy="6.5" r="0.7" fill="#2a8de0"/></svg>
<div style="left:563px;top:170.5px;width:131px;height:8.5px;background:#dfe2fb;border:1px solid #d2d5ea;border-top-color:#c6c9e0;box-sizing:border-box"></div>
<span class="t" style="left:565px;top:173.40px;font-size:5.2px;line-height:5.2px;color:#111;font-weight:bold;transform:scaleX(0.9064);transform-origin:0 0;-webkit-text-stroke:0.1px #111;">PrintStyle</span>
<svg style="left:688px;top:173.0px;" width="4" height="3" viewBox="0 0 4 3"><path d="M0.2,2.2 L2,0.3 L3.8,2.2Z" fill="#111"/></svg>
<div style="left:563px;top:179px;width:131px;height:39.5px;border-left:1px solid #e2e2e2;border-bottom:1px solid #e2e2e2;box-sizing:border-box;background:#f3f3f3"></div>
<div style="left:578px;top:183.3px;width:116px;height:8px;background:#fff;border-top:1px solid #c8c8c8;border-left:1px solid #c8c8c8;box-sizing:border-box"></div>
<div style="left:687px;top:183.3px;width:7px;height:8px;background:#ececec;border:1px solid #c6c6c6;box-sizing:border-box"></div>
<svg style="left:687px;top:183.3px;" width="7" height="8" viewBox="0 0 7 8"><polyline points="2,3.4 3.5,4.8 5,3.4" stroke="#666" stroke-width="0.6" fill="none"/></svg>
<span class="t" style="left:579.5px;top:185.50px;font-size:5.2px;line-height:5.2px;color:#222;transform:scaleX(0.8274);transform-origin:0 0;-webkit-text-stroke:0.08px #222;">No</span>
<div style="left:578px;top:192px;width:116px;height:8px;background:#fff;border-top:1px solid #c8c8c8;border-left:1px solid #c8c8c8;box-sizing:border-box"></div>
<div style="left:687px;top:192px;width:7px;height:8px;background:#ececec;border:1px solid #c6c6c6;box-sizing:border-box"></div>
<svg style="left:687px;top:192px;" width="7" height="8" viewBox="0 0 7 8"><polyline points="2,3.4 3.5,4.8 5,3.4" stroke="#666" stroke-width="0.6" fill="none"/></svg>
<span class="t" style="left:579.5px;top:194.20px;font-size:5.2px;line-height:5.2px;color:#222;transform:scaleX(0.7876);transform-origin:0 0;-webkit-text-stroke:0.08px #222;">monochrome.ctb</span>
<div style="left:578px;top:200.7px;width:116px;height:8px;background:#efefef;border-top:1px solid #c8c8c8;border-left:1px solid #c8c8c8;box-sizing:border-box"></div>
<div style="left:687px;top:200.7px;width:7px;height:8px;background:#e6e6e6;border:1px solid #c6c6c6;box-sizing:border-box"></div>
<svg style="left:687px;top:200.7px;" width="7" height="8" viewBox="0 0 7 8"><polyline points="2,3.4 3.5,4.8 5,3.4" stroke="#aaa" stroke-width="0.6" fill="none"/></svg>
<span class="t" style="left:579.5px;top:202.90px;font-size:5.2px;line-height:5.2px;color:#a8a8a8;transform:scaleX(0.8381);transform-origin:0 0;-webkit-text-stroke:0.08px #a8a8a8;">ByColor</span>
<div style="left:578px;top:209.3px;width:116px;height:8px;background:#b4d0ee;border-top:1px solid #dcdcdc;border-left:1px solid #dcdcdc;box-sizing:border-box"></div>
<span class="t" style="left:579.5px;top:211.50px;font-size:5.2px;line-height:5.2px;color:#222;transform:scaleX(0.8045);transform-origin:0 0;-webkit-text-stroke:0.08px #222;">None</span>
<svg style="left:566px;top:183.3px;" width="9" height="8" viewBox="0 0 9 8"><ellipse cx="4.5" cy="4" rx="3.6" ry="3.4" fill="#e8f0f6" stroke="#7aaad0" stroke-width="0.6"/><path d="M0.9,4 H8.1" stroke="#7aaad0" stroke-width="0.6"/><path d="M4.5,0.8 V7.4" stroke="#4cb050" stroke-width="0.8"/></svg>
<svg style="left:566px;top:192px;" width="9" height="8" viewBox="0 0 9 8"><rect x="0.8" y="1" width="5" height="6.4" fill="#7a8fa8"/><rect x="1.6" y="2" width="1.2" height="3" fill="#d04040"/><rect x="3.2" y="2" width="1.2" height="3" fill="#40a040"/><path d="M8.2,0.6 L5.5,6.5" stroke="#f0b400" stroke-width="1.1"/><path d="M2.8,6 L3.5,7.6" stroke="#222" stroke-width="0.6"/></svg>
<svg style="left:566px;top:200.7px;" width="9" height="8" viewBox="0 0 9 8"><rect x="0.8" y="1" width="1.6" height="6.4" fill="#d02020"/><rect x="3" y="1.5" width="1.4" height="5" fill="#40a040"/><path d="M8.2,0.6 L5.5,6.5" stroke="#f0b400" stroke-width="1.1"/><path d="M5,1.8 L6,1" stroke="#2a8de0" stroke-width="0.8"/></svg>
<svg style="left:566px;top:209.3px;" width="9" height="8" viewBox="0 0 9 8"><rect x="0.8" y="0.8" width="1.8" height="6.8" fill="#d02020"/><rect x="3" y="1.5" width="5" height="6" fill="#fff" stroke="#333" stroke-width="0.6"/><rect x="5.5" y="0.8" width="2.6" height="3" fill="#2a8de0"/><path d="M3,7 H8" stroke="#333" stroke-width="1"/></svg>
<div style="left:563px;top:219.6px;width:131px;height:8.5px;background:#dfe2fb;border:1px solid #d2d5ea;border-top-color:#c6c9e0;box-sizing:border-box"></div>
<span class="t" style="left:565px;top:222.50px;font-size:5.2px;line-height:5.2px;color:#111;font-weight:bold;transform:scaleX(0.8932);transform-origin:0 0;-webkit-text-stroke:0.1px #111;">View</span>
<svg style="left:688px;top:222.1px;" width="4" height="3" viewBox="0 0 4 3"><path d="M0.2,2.2 L2,0.3 L3.8,2.2Z" fill="#111"/></svg>
<div style="left:563px;top:228px;width:131px;height:48.80000000000001px;border-left:1px solid #e2e2e2;border-bottom:1px solid #e2e2e2;box-sizing:border-box;background:#f3f3f3"></div>
<div style="left:578px;top:232.5px;width:116px;height:8px;background:#b4d0ee;border-top:1px solid #dcdcdc;border-left:1px solid #dcdcdc;box-sizing:border-box"></div>
<span class="t" style="left:579.5px;top:234.70px;font-size:5.2px;line-height:5.2px;color:#222;transform:scaleX(0.7372);transform-origin:0 0;-webkit-text-stroke:0.08px #222;">-38.264</span>
<div style="left:578px;top:241.2px;width:116px;height:8px;background:#b4d0ee;border-top:1px solid #dcdcdc;border-left:1px solid #dcdcdc;box-sizing:border-box"></div>
<span class="t" style="left:579.5px;top:243.40px;font-size:5.2px;line-height:5.2px;color:#222;transform:scaleX(0.7860);transform-origin:0 0;-webkit-text-stroke:0.08px #222;">70.285</span>
<div style="left:578px;top:249.9px;width:116px;height:8px;background:#b4d0ee;border-top:1px solid #dcdcdc;border-left:1px solid #dcdcdc;box-sizing:border-box"></div>
<span class="t" style="left:579.5px;top:252.10px;font-size:5.2px;line-height:5.2px;color:#222;transform:scaleX(0.8991);transform-origin:0 0;-webkit-text-stroke:0.08px #222;">0</span>
<div style="left:578px;top:258.6px;width:116px;height:8px;background:#b4d0ee;border-top:1px solid #dcdcdc;border-left:1px solid #dcdcdc;box-sizing:border-box"></div>
<span class="t" style="left:579.5px;top:260.80px;font-size:5.2px;line-height:5.2px;color:#222;transform:scaleX(0.7860);transform-origin:0 0;-webkit-text-stroke:0.08px #222;">52.092</span>
<div style="left:578px;top:267.3px;width:116px;height:8px;background:#b4d0ee;border-top:1px solid #dcdcdc;border-left:1px solid #dcdcdc;box-sizing:border-box"></div>
<span class="t" style="left:579.5px;top:269.50px;font-size:5.2px;line-height:5.2px;color:#222;transform:scaleX(0.7860);transform-origin:0 0;-webkit-text-stroke:0.08px #222;">45.078</span>
<svg style="left:566px;top:232.5px;" width="9" height="8" viewBox="0 0 9 8"><circle cx="4.6" cy="3.9" r="2.8" fill="#fff" stroke="#555" stroke-width="0.5"/><circle cx="4.6" cy="3.9" r="0.8" fill="#e8a800"/><path d="M5.2,6.6 L6,7.6" stroke="#555" stroke-width="0.5"/></svg>
<svg style="left:566px;top:241.2px;" width="9" height="8" viewBox="0 0 9 8"><circle cx="4.6" cy="3.9" r="2.8" fill="#fff" stroke="#555" stroke-width="0.5"/><circle cx="4.6" cy="3.9" r="0.8" fill="#e8a800"/><path d="M5.2,6.6 L6,7.6" stroke="#555" stroke-width="0.5"/></svg>
<svg style="left:566px;top:249.9px;" width="9" height="8" viewBox="0 0 9 8"><circle cx="4.6" cy="3.9" r="2.8" fill="#fff" stroke="#555" stroke-width="0.5"/><circle cx="4.6" cy="3.9" r="0.8" fill="#e8a800"/><path d="M5.2,6.6 L6,7.6" stroke="#555" stroke-width="0.5"/></svg>
<svg style="left:566px;top:258.6px;" width="9" height="8" viewBox="0 0 9 8"><path d="M3.2,0.8 H6 M3.2,7.2 H6 M4.6,0.8 V7.2" stroke="#3a9de8" stroke-width="0.6"/></svg>
<svg style="left:566px;top:267.3px;" width="9" height="8" viewBox="0 0 9 8"><path d="M1.2,2.6 V5.4 M7.8,2.6 V5.4 M1.2,4 H7.8" stroke="#3a9de8" stroke-width="0.6"/></svg>
<div style="left:563px;top:277.3px;width:131px;height:8.5px;background:#dfe2fb;border:1px solid #d2d5ea;border-top-color:#c6c9e0;box-sizing:border-box"></div>
<span class="t" style="left:565px;top:280.20px;font-size:5.2px;line-height:5.2px;color:#111;font-weight:bold;transform:scaleX(0.8218);transform-origin:0 0;-webkit-text-stroke:0.1px #111;">Misc</span>
<svg style="left:688px;top:279.8px;" width="4" height="3" viewBox="0 0 4 3"><path d="M0.2,2.2 L2,0.3 L3.8,2.2Z" fill="#111"/></svg>
<div style="left:563px;top:285.5px;width:131px;height:47.30000000000001px;border-left:1px solid #e2e2e2;border-bottom:1px solid #e2e2e2;box-sizing:border-box;background:#f3f3f3"></div>
<div style="left:578px;top:290.6px;width:116px;height:8px;background:#fff;border-top:1px solid #c8c8c8;border-left:1px solid #c8c8c8;box-sizing:border-box"></div>
<div style="left:687px;top:290.6px;width:7px;height:8px;background:#ececec;border:1px solid #c6c6c6;box-sizing:border-box"></div>
<svg style="left:687px;top:290.6px;" width="7" height="8" viewBox="0 0 7 8"><polyline points="2,3.4 3.5,4.8 5,3.4" stroke="#666" stroke-width="0.6" fill="none"/></svg>
<span class="t" style="left:579.5px;top:292.80px;font-size:5.2px;line-height:5.2px;color:#222;transform:scaleX(0.8993);transform-origin:0 0;-webkit-text-stroke:0.08px #222;">1:1</span>
<div style="left:578px;top:299px;width:116px;height:8px;background:#fff;border-top:1px solid #c8c8c8;border-left:1px solid #c8c8c8;box-sizing:border-box"></div>
<div style="left:687px;top:299px;width:7px;height:8px;background:#ececec;border:1px solid #c6c6c6;box-sizing:border-box"></div>
<svg style="left:687px;top:299px;" width="7" height="8" viewBox="0 0 7 8"><polyline points="2,3.4 3.5,4.8 5,3.4" stroke="#666" stroke-width="0.6" fill="none"/></svg>
<span class="t" style="left:579.5px;top:301.20px;font-size:5.2px;line-height:5.2px;color:#222;transform:scaleX(0.8841);transform-origin:0 0;-webkit-text-stroke:0.08px #222;">Yes</span>
<div style="left:578px;top:307.5px;width:116px;height:8px;background:#fff;border-top:1px solid #c8c8c8;border-left:1px solid #c8c8c8;box-sizing:border-box"></div>
<div style="left:687px;top:307.5px;width:7px;height:8px;background:#ececec;border:1px solid #c6c6c6;box-sizing:border-box"></div>
<svg style="left:687px;top:307.5px;" width="7" height="8" viewBox="0 0 7 8"><polyline points="2,3.4 3.5,4.8 5,3.4" stroke="#666" stroke-width="0.6" fill="none"/></svg>
<span class="t" style="left:579.5px;top:309.70px;font-size:5.2px;line-height:5.2px;color:#222;transform:scaleX(0.8841);transform-origin:0 0;-webkit-text-stroke:0.08px #222;">Yes</span>
<div style="left:578px;top:316px;width:116px;height:8px;background:#fff;border-top:1px solid #c8c8c8;border-left:1px solid #c8c8c8;box-sizing:border-box"></div>
<div style="left:687px;top:316px;width:7px;height:8px;background:#ececec;border:1px solid #c6c6c6;box-sizing:border-box"></div>
<svg style="left:687px;top:316px;" width="7" height="8" viewBox="0 0 7 8"><polyline points="2,3.4 3.5,4.8 5,3.4" stroke="#666" stroke-width="0.6" fill="none"/></svg>
<span class="t" style="left:579.5px;top:318.20px;font-size:5.2px;line-height:5.2px;color:#222;transform:scaleX(0.8841);transform-origin:0 0;-webkit-text-stroke:0.08px #222;">Yes</span>
<div style="left:578px;top:324.5px;width:116px;height:8px;background:#b4d0ee;border-top:1px solid #dcdcdc;border-left:1px solid #dcdcdc;box-sizing:border-box"></div>
<span class="t" style="left:567.6px;top:292.61px;font-size:6.6px;line-height:6.6px;color:#222;transform:scaleX(1.2266);transform-origin:0 0;-webkit-text-stroke:0.12px #222;">A</span>
<svg style="left:566px;top:299px;" width="9" height="8" viewBox="0 0 9 8"><path d="M1.6,1 V6.6 H6.5" fill="none" stroke="#333" stroke-width="0.6"/><rect x="1" y="6" width="1.2" height="1.2" fill="#222"/><rect x="0.5" y="0.3" width="7.6" height="7.4" fill="none" stroke="#7aaee0" stroke-width="0.6"/></svg>
<svg style="left:566px;top:307.5px;" width="9" height="8" viewBox="0 0 9 8"><path d="M1.6,1 V6.6 H6.5" fill="none" stroke="#333" stroke-width="0.6"/><rect x="1" y="6" width="1.2" height="1.2" fill="#222"/><path d="M4.5,1.2 H8 M4.5,2.4 H8" stroke="#888" stroke-width="0.4"/></svg>
<svg style="left:566px;top:316px;" width="9" height="8" viewBox="0 0 9 8"><path d="M1.6,1 V6.6 H6.5" fill="none" stroke="#333" stroke-width="0.6"/><rect x="1" y="6" width="1.2" height="1.2" fill="#222"/><circle cx="6.5" cy="1.2" r="0.9" fill="#3cb043"/></svg>
<svg style="left:566px;top:324.5px;" width="9" height="8" viewBox="0 0 9 8"><path d="M1.6,1 V6.6 H6.5" fill="none" stroke="#333" stroke-width="0.6"/><rect x="1" y="6" width="1.2" height="1.2" fill="#222"/><path d="M5,3 L6.2,0.4 L7.4,3 M5.4,2.2 H7" stroke="#333" stroke-width="0.5" fill="none"/></svg>
<svg style="left:710px;top:64px;" width="9" height="20" viewBox="0 0 9 20"><path d="M2.8,2.8 L6.2,6.2 M6.2,2.8 L2.8,6.2" stroke="#111" stroke-width="0.9"/><path d="M3,11.5 H6 M3.6,11.5 L3.6,14.5 H5.4 V11.5 M3,14.5 H6 M4.5,14.5 V16.5" stroke="#333" stroke-width="0.7" fill="#555"/></svg>
<div style="left:719px;top:65px;width:8px;height:29px;border-bottom:1px solid #d8d8d8;box-sizing:border-box"></div>
<div style="left:719px;top:94px;width:8px;height:42px;border-bottom:1px solid #d8d8d8;box-sizing:border-box"></div>
<div style="left:719px;top:136px;width:8px;height:29px;background:#fff;border-bottom:1px solid #d8d8d8;box-sizing:border-box"></div>
<span class="t" style="left:712.27px;top:76.90px;font-size:5.2px;line-height:5.2px;color:#333;-webkit-text-stroke:0.08px #333;transform:rotate(-90deg) scaleX(0.8987);transform-origin:11.13px 2.60px">HandyMo</span>
<span class="t" style="left:702.45px;top:111.90px;font-size:5.2px;line-height:5.2px;color:#333;-webkit-text-stroke:0.08px #333;transform:rotate(-90deg) scaleX(0.7875);transform-origin:20.95px 2.60px">G-code Generator</span>
<span class="t" style="left:711.35px;top:147.40px;font-size:5.2px;line-height:5.2px;color:#333;-webkit-text-stroke:0.08px #333;transform:rotate(-90deg) scaleX(0.8861);transform-origin:11.85px 2.60px">Properties</span>
<span class="t" style="left:702.45px;top:408.60px;font-size:5.2px;line-height:5.2px;color:#333;-webkit-text-stroke:0.08px #333;transform:rotate(-90deg) scaleX(0.9916);transform-origin:11.85px 2.60px">Properties</span>
<svg style="left:710px;top:424px;" width="8" height="8" viewBox="0 0 8 8"><circle cx="2" cy="3.2" r="0.9" fill="#e8c000"/><circle cx="4.2" cy="3.2" r="0.9" fill="#d03030"/><circle cx="6.4" cy="3.2" r="0.9" fill="#3cb043"/><rect x="3" y="5" width="3" height="1.8" fill="#a0a8b0"/></svg>
<svg style="left:1px;top:427px;" width="90" height="7" viewBox="0 0 90 7">
<path d="M47.5,0 C49.5,0 49.5,5.8 52,5.8 H70 C72.5,5.8 72.5,0 74.5,0" fill="#e6e6e6" stroke="#6a6a6a" stroke-width="0.55"/>
<path d="M22.5,0 C24.5,0 24.5,5.8 27,5.8 H45 C47.5,5.8 47.5,0 49.5,0" fill="#e6e6e6" stroke="#6a6a6a" stroke-width="0.55"/>
<path d="M0,0 C2,0 2,5.8 4.5,5.8 H20 C22.5,5.8 22.5,0 24.5,0" fill="#fff" stroke="#444" stroke-width="0.6"/>
<rect x="75.3" y="0.8" width="8.6" height="4.8" fill="#e6e6e6" stroke="#cfcfcf" stroke-width="0.6"/>
<path d="M79.6,1.6 V4.8 M78,3.2 H81.2" stroke="#444" stroke-width="0.6"/>
</svg>
<span class="t" style="left:6px;top:429.24px;font-size:4.8px;line-height:4.8px;color:#222;transform:scaleX(0.9945);transform-origin:0 0;-webkit-text-stroke:0.15px #222;">Model</span>
<span class="t" style="left:30px;top:429.24px;font-size:4.8px;line-height:4.8px;color:#555;transform:scaleX(0.8874);transform-origin:0 0;-webkit-text-stroke:0.05px #555;">Sheet1</span>
<span class="t" style="left:54.5px;top:429.24px;font-size:4.8px;line-height:4.8px;color:#555;transform:scaleX(0.8874);transform-origin:0 0;-webkit-text-stroke:0.05px #555;">Sheet2</span>
<span class="t" style="left:3px;top:437.60px;font-size:5.2px;line-height:5.2px;color:#1a1a1a;font-weight:bold;transform:scaleX(0.8491);transform-origin:0 0;">Command window</span>
<svg style="left:711px;top:435px;" width="7" height="7" viewBox="0 0 7 7"><rect x="2.4" y="1.6" width="2.6" height="2.6" fill="none" stroke="#222" stroke-width="0.7"/><rect x="1.4" y="2.6" width="2.6" height="2.6" fill="#c9c9c9" stroke="#222" stroke-width="0.7"/></svg>
<svg style="left:719px;top:435px;" width="7" height="7" viewBox="0 0 7 7"><path d="M2.2,2.2 L5,5 M5,2.2 L2.2,5" stroke="#222" stroke-width="0.7"/></svg>
<div style="left:1px;top:443px;width:719px;height:6px;overflow:hidden"><span class="t" style="left:2px;top:-1.00px;font-size:5.2px;line-height:5.2px;color:#333;-webkit-text-stroke:0.05px #333;transform:scaleX(1.0018);transform-origin:0 0">Press ESC or ENTER to exit</span></div>
<span class="t" style="left:3px;top:448.00px;font-size:5.2px;line-height:5.2px;color:#333;transform:scaleX(0.9743);transform-origin:0 0;-webkit-text-stroke:0.05px #333;">Command: u</span>
<span class="t" style="left:3px;top:454.20px;font-size:5.2px;line-height:5.2px;color:#333;transform:scaleX(0.9662);transform-origin:0 0;-webkit-text-stroke:0.05px #333;">Undo ROLLVIEW</span>
<span class="t" style="left:3px;top:460.50px;font-size:5.2px;line-height:5.2px;color:#333;transform:scaleX(0.9509);transform-origin:0 0;-webkit-text-stroke:0.05px #333;">Command:&nbsp; U</span>
<span class="t" style="left:3px;top:466.60px;font-size:5.2px;line-height:5.2px;color:#333;transform:scaleX(0.9693);transform-origin:0 0;-webkit-text-stroke:0.05px #333;">Undo PLANVIEW</span>
<span class="t" style="left:3px;top:474.70px;font-size:5.2px;line-height:5.2px;color:#333;transform:scaleX(0.9438);transform-origin:0 0;-webkit-text-stroke:0.05px #333;">Command:</span>
<div style="left:720px;top:444px;width:7px;height:29px;background:#f6f6f6"></div>
<svg style="left:720px;top:444px;" width="7" height="29" viewBox="0 0 7 29"><path d="M1.8,4 L3.5,2.3 L5.2,4Z" fill="#222"/><path d="M1.8,25.6 L3.5,27.3 L5.2,25.6Z" fill="#222"/></svg>
<div style="left:720.5px;top:463px;width:6px;height:4.5px;background:#cdcdcd"></div>
<span class="t" style="left:3px;top:485.54px;font-size:4.8px;line-height:4.8px;color:#333;transform:scaleX(0.8722);transform-origin:0 0;-webkit-text-stroke:0.05px #333;">DraftSight 2019 x64</span>
<div style="left:258px;top:481px;width:10px;height:11px;background:#e2e2e2"></div>
<div style="left:258px;top:481px;width:11px;height:11px;background:#ececec"></div>
<div style="left:271px;top:481px;width:10px;height:11px;background:#e2e2e2"></div>
<div style="left:284px;top:481px;width:10px;height:11px;background:#e2e2e2"></div>
<div style="left:297px;top:481px;width:10px;height:11px;background:#e2e2e2"></div>
<div style="left:311px;top:481px;width:10px;height:11px;background:#e2e2e2"></div>
<div style="left:325px;top:481.5px;width:10.5px;height:10.5px;background:#d6e7f7;border:1px solid #86b6e6;box-sizing:border-box"></div>
<div style="left:338px;top:481.5px;width:10.5px;height:10.5px;background:#d6e7f7;border:1px solid #86b6e6;box-sizing:border-box"></div>
<div style="left:351px;top:481.5px;width:10.5px;height:10.5px;background:#d6e7f7;border:1px solid #86b6e6;box-sizing:border-box"></div>
<div style="left:364px;top:481.5px;width:10.5px;height:10.5px;background:#d6e7f7;border:1px solid #86b6e6;box-sizing:border-box"></div>
<svg style="left:259px;top:482px;" width="9" height="9" viewBox="0 0 9 9"><circle cx="3.5" cy="3.2" r="2.2" fill="#4a5f7a"/><rect x="1.5" y="4.5" width="4" height="2.5" fill="#334"/><circle cx="6" cy="6.2" r="1.8" fill="#f0b400"/></svg>
<svg style="left:272px;top:482px;" width="9" height="9" viewBox="0 0 9 9"><path d="M1.5,1.5 L7.5,7.5" stroke="#333" stroke-width="0.8"/><circle cx="2" cy="2" r="1" fill="#d03030"/><path d="M4.5,7.5 H7.5 V4.5" stroke="#555" stroke-width="0.6" fill="none"/></svg>
<svg style="left:285px;top:482px;" width="9" height="9" viewBox="0 0 9 9"><path d="M1,2 H8 M1,4.5 H8 M1,7 H8 M2.2,1 V8 M4.5,1 V8 M6.8,1 V8" stroke="#222" stroke-width="0.7"/></svg>
<svg style="left:298px;top:482px;" width="9" height="9" viewBox="0 0 9 9"><path d="M2,1.5 H7 V7.5 H2 Z" fill="none" stroke="#555" stroke-width="0.6"/><path d="M2,4.5 H7 M4.5,1.5 V7.5" stroke="#999" stroke-width="0.5"/></svg>
<svg style="left:312px;top:482px;" width="9" height="9" viewBox="0 0 9 9"><circle cx="4.5" cy="4.5" r="3" fill="none" stroke="#444" stroke-width="0.6"/><path d="M4.5,4.5 L6.5,2.5" stroke="#2a8de0" stroke-width="0.7"/></svg>
<svg style="left:326px;top:482px;" width="9" height="9" viewBox="0 0 9 9"><path d="M2.6,2 L2.6,7 L3.9,5.8 L5.2,7.8 L5.9,7.4 L4.8,5.4 L6.6,5.4Z" fill="#fff" stroke="#333" stroke-width="0.55"/><path d="M1.2,1 V3" stroke="#5aa0e0" stroke-width="0.6"/><circle cx="7.2" cy="7.4" r="1" fill="#d03030"/></svg>
<svg style="left:339px;top:482px;" width="9" height="9" viewBox="0 0 9 9"><path d="M1.4,1 V3" stroke="#5aa0e0" stroke-width="0.6"/><path d="M3.8,3.2 L5,1.6 L6.2,3.2 V7.6 H3.8Z" fill="#9aa4ae"/><path d="M2.8,7.8 H7.2" stroke="#888" stroke-width="0.5"/></svg>
<svg style="left:352px;top:482px;" width="9" height="9" viewBox="0 0 9 9"><path d="M2.4,1.8 H6.4 L7.6,3.4 V7.4 H2.4Z" fill="none" stroke="#444" stroke-width="0.6" stroke-dasharray="0.9,0.6"/><path d="M1,4.5 H2.4 M7.6,4.5 H8.4" stroke="#444" stroke-width="0.5"/></svg>
<svg style="left:365px;top:482px;" width="9" height="9" viewBox="0 0 9 9"><circle cx="1.8" cy="6.6" r="0.7" fill="#2a8de0"/><path d="M5.2,1.2 V2.8" stroke="#2a8de0" stroke-width="0.8"/><rect x="3.4" y="3" width="3.8" height="4.6" fill="#f4f4f4" stroke="#777" stroke-width="0.5"/></svg>
<div style="left:377px;top:481.5px;width:33px;height:9.5px;background:#d6e7f7;border:1px solid #86b6e6;box-sizing:border-box"></div>
<span class="t" style="left:379.3px;top:486.14px;font-size:4.8px;line-height:4.8px;color:#222;transform:scaleX(0.9457);transform-origin:0 0;-webkit-text-stroke:0.05px #222;">Dynamic CCS</span>
<div style="left:413px;top:481px;width:38.5px;height:10px;background:#e6e6e6;border:1px solid #d8d8d8;box-sizing:border-box"></div>
<span class="t" style="left:415.2px;top:486.14px;font-size:4.8px;line-height:4.8px;color:#333;transform:scaleX(1.0457);transform-origin:0 0;-webkit-text-stroke:0.05px #333;">Annotation</span>
<svg style="left:442.5px;top:484px;" width="6" height="5" viewBox="0 0 6 5"><path d="M0.6,1 H5 L2.8,3.6Z" fill="#111"/></svg>
<span class="t" style="left:453.5px;top:486.24px;font-size:4.8px;line-height:4.8px;color:#333;transform:scaleX(0.8613);transform-origin:0 0;-webkit-text-stroke:0.05px #333;">(1:1)</span>
<span class="t" style="left:465px;top:486.24px;font-size:4.8px;line-height:4.8px;color:#333;transform:scaleX(1.0751);transform-origin:0 0;-webkit-text-stroke:0.05px #333;">(3.69,22.901,0)</span>
<div style="left:0px;top:0px;width:728px;height:1px;background:#8a9ab5"></div>
<div style="left:0px;top:0px;width:1px;height:495px;background:#8a9ab5"></div>
<div style="left:727px;top:0px;width:1px;height:495px;background:#8a9ab5"></div>
<div style="left:0px;top:494px;width:728px;height:1px;background:#8a9ab5"></div>
</body></html>
